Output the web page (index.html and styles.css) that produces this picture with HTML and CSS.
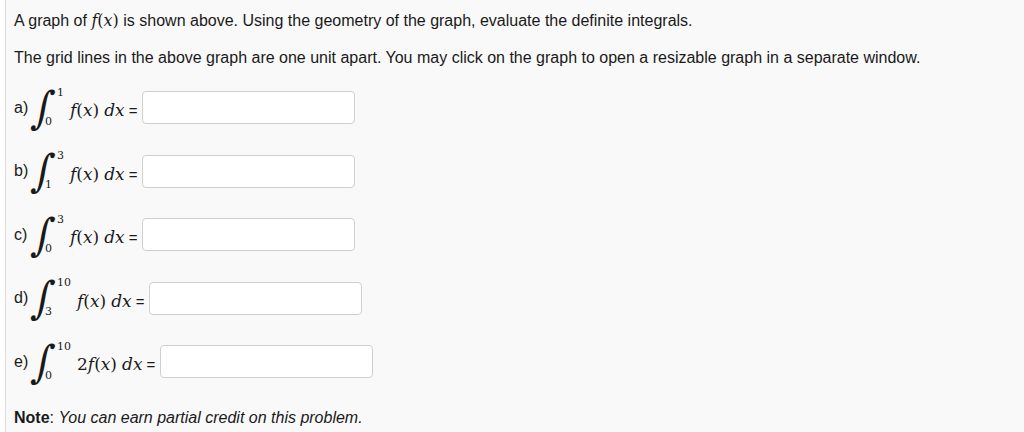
FILE: index.html
```html
<!DOCTYPE html>
<html>
<head>
<meta charset="utf-8">
<link rel="stylesheet" href="styles.css">
</head>
<body>
<div class="problem">
  <p class="intro first">A graph of <span class="mi">f</span><span class="mo">(</span><span class="mi">x</span><span class="mo">)</span> is shown above. Using the geometry of the graph, evaluate the definite integrals.</p>
  <p class="intro">The grid lines in the above graph are one unit apart. You may click on the graph to open a resizable graph in a separate window.</p>

  <div class="row">
    <span class="lbl">a)</span>
    <span class="int"><span class="sign">∫</span><span class="lims"><span class="up">1</span><span class="lo">0</span></span></span>
    <span class="expr"><span class="mi">f</span><span class="mo">(</span><span class="mi">x</span><span class="mo">)</span><span class="sp"></span><span class="mi">dx</span></span>
    <span class="eq">=</span>
    <input class="ans" type="text">
  </div>

  <div class="row">
    <span class="lbl">b)</span>
    <span class="int"><span class="sign">∫</span><span class="lims"><span class="up">3</span><span class="lo">1</span></span></span>
    <span class="expr"><span class="mi">f</span><span class="mo">(</span><span class="mi">x</span><span class="mo">)</span><span class="sp"></span><span class="mi">dx</span></span>
    <span class="eq">=</span>
    <input class="ans" type="text">
  </div>

  <div class="row">
    <span class="lbl">c)</span>
    <span class="int"><span class="sign">∫</span><span class="lims"><span class="up">3</span><span class="lo">0</span></span></span>
    <span class="expr"><span class="mi">f</span><span class="mo">(</span><span class="mi">x</span><span class="mo">)</span><span class="sp"></span><span class="mi">dx</span></span>
    <span class="eq">=</span>
    <input class="ans" type="text">
  </div>

  <div class="row">
    <span class="lbl">d)</span>
    <span class="int"><span class="sign">∫</span><span class="lims"><span class="up">10</span><span class="lo">3</span></span></span>
    <span class="expr"><span class="mi">f</span><span class="mo">(</span><span class="mi">x</span><span class="mo">)</span><span class="sp"></span><span class="mi">dx</span></span>
    <span class="eq">=</span>
    <input class="ans" type="text">
  </div>

  <div class="row">
    <span class="lbl">e)</span>
    <span class="int"><span class="sign">∫</span><span class="lims"><span class="up">10</span><span class="lo">0</span></span></span>
    <span class="expr"><span class="mn">2</span><span class="mi">f</span><span class="mo">(</span><span class="mi">x</span><span class="mo">)</span><span class="sp"></span><span class="mi">dx</span></span>
    <span class="eq">=</span>
    <input class="ans" type="text">
  </div>

  <p class="note"><b>Note</b>: <i>You can earn partial credit on this problem.</i></p>
</div>
</body>
</html>
```
FILE: styles.css
```css
html, body {
  margin: 0;
  padding: 0;
  background: #ffffff;
}
body {
  font-family: "Liberation Sans", Arial, sans-serif;
  font-size: 16px;
  color: #1a1a1a;
}
.problem {
  margin-left: 5px;
  border-left: 1px solid #dcdcdc;
  background: #f9f9f9;
  height: 432px;
  padding: 12px 0 0 8px;
  box-sizing: border-box;
  overflow: hidden;
}
.intro {
  margin: 19px 0 0 0;
  line-height: 18px;
}
.intro.first { margin-top: 0; }
.mi {
  font-family: "DejaVu Serif", "Liberation Serif", serif;
  font-style: italic;
  font-size: 17px;
}
.mo, .mn {
  font-family: "DejaVu Serif", "Liberation Serif", serif;
  font-size: 17px;
}
.intro .mi, .intro .mo { font-size: 16px; }
.sp { display: inline-block; width: 5px; }
.row {
  display: flex;
  align-items: center;
  height: 48px;
  margin-top: 16.5px;
}
.row + .row { margin-top: 15.5px; }
.lbl {
  width: 19px;
  flex: none;
}
.int {
  display: inline-flex;
  align-items: stretch;
  height: 48px;
  margin-right: 6px;
  flex: none;
}
.sign {
  font-family: "DejaVu Serif", "Liberation Serif", serif;
  font-size: 39px;
  line-height: 48px;
  transform: scaleY(1.14) skewX(-10deg);
  display: inline-block;
  width: 19px;
}
.lims {
  display: flex;
  flex-direction: column;
  justify-content: space-between;
  font-family: "DejaVu Serif", "Liberation Serif", serif;
  font-size: 11px;
  padding: 3px 0 4px 0;
  line-height: 12px;
}
.lims .up { margin-left: 5px; }
.lims .lo { margin-left: -7px; }
.expr {
  white-space: pre;
  line-height: 20px;
  padding-top: 6px;
}
.eq {
  margin: 6px 5px 0 4px;
  font-size: 15px;
}
.ans {
  width: 213px;
  height: 33px;
  box-sizing: border-box;
  border: 1px solid #cfcfcf;
  border-radius: 4px;
  background: #fff;
  padding: 0 6px;
  margin: 0;
  font-size: 14px;
  flex: none;
}
.note {
  margin: 23px 0 0 0;
  line-height: 18px;
}
.note i { font-style: italic; }
```
